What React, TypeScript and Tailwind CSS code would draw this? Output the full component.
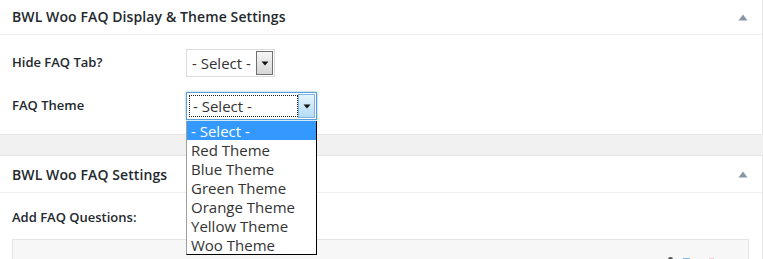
import React from 'react';

const themes = ['- Select -', 'Red Theme', 'Blue Theme', 'Green Theme', 'Orange Theme', 'Yellow Theme', 'Woo Theme'];

function Toggle() {
  return (
    <svg width="10" height="7" viewBox="0 0 10 7" className="block">
      <path d="M5 0.5 L9.5 6.5 L0.5 6.5 Z" fill="#8a96a3" />
    </svg>
  );
}

function Caret() {
  return (
    <svg width="8" height="5" viewBox="0 0 8 5" className="block">
      <path d="M0.5 0.5 L7.5 0.5 L4 4.5 Z" fill="#111" />
    </svg>
  );
}

export default function App() {
  return (
    <div className="relative w-[763px] h-[259px] overflow-hidden bg-[#f1f1f1] font-['Open_Sans',sans-serif] text-[#32373c]">
      {/* Display & Theme box */}
      <div className="w-[763px] bg-white border-r border-b border-[#e5e5e5]">
        <div className="h-[35px] border-b border-[#eeeeee] flex items-center justify-between pl-3 pr-[14px]">
          <h2 className="text-[14px] font-semibold text-[#23282d] leading-none tracking-[0.1px]">BWL Woo FAQ Display &amp; Theme Settings</h2>
          <Toggle />
        </div>
        <div className="px-3 pt-[14px] pb-[14px] flex flex-col gap-[15px]">
          <div className="flex items-center h-[28px]">
            <div className="w-[174px] text-[13px] font-semibold text-[#23282d]">Hide FAQ Tab?</div>
            <div className="h-[28px] w-[89px] border border-[#dddddd] bg-white flex items-center justify-between pl-[5px] pr-[1px]">
              <span className="text-[15px] leading-none text-[#333]">- Select -</span>
              <div className="h-[24px] w-[17px] border border-[#707070] bg-gradient-to-b from-[#f6f6f6] to-[#d6d6d6] flex items-center justify-center">
                <Caret />
              </div>
            </div>
          </div>
          <div className="flex items-center h-[28px]">
            <div className="w-[174px] text-[13px] font-semibold text-[#23282d]">FAQ Theme</div>
            <div className="h-[28px] w-[131px] border border-[#5b9dd9] bg-white flex items-center justify-between pl-[2px] pr-[1px] shadow-[0_0_2px_rgba(30,140,190,0.6)]">
              <div className="h-[22px] w-[109px] border border-dotted border-[#222] flex items-center pl-[3px]">
                <span className="text-[15px] leading-none text-[#333]">- Select -</span>
              </div>
              <div className="h-[24px] w-[17px] border border-[#7eb4ea] bg-gradient-to-b from-[#e5f4fc] to-[#b4dcf4] flex items-center justify-center">
                <Caret />
              </div>
            </div>
          </div>
        </div>
      </div>

      {/* FAQ Settings box */}
      <div className="mt-5 w-[763px] bg-white border-t border-r border-[#e5e5e5] h-[110px]">
        <div className="h-[37px] border-b border-[#eeeeee] flex items-center justify-between pl-3 pr-[14px]">
          <h2 className="text-[14px] font-semibold text-[#23282d] leading-none tracking-[0.1px] pt-[1px]">BWL Woo FAQ Settings</h2>
          <Toggle />
        </div>
        <div className="px-3 pt-[15px]">
          <div className="text-[13px] font-semibold text-[#23282d] leading-[18px]">Add FAQ Questions:</div>
          <div className="mt-[13px] w-[737px] h-[30px] border border-[#e5e5e5] bg-[#f7f7f7] relative">
            <span className="absolute left-[655px] top-[17px] w-[5px] h-[4px] rounded-t-full bg-[#555]" />
            <span className="absolute left-[670px] top-[18px] w-[7px] h-[3px] bg-[#7fb7e0]" />
            <span className="absolute left-[696px] top-[18px] w-[5px] h-[3px] bg-[#f6c9d6]" />
          </div>
        </div>
      </div>

      {/* open dropdown list */}
      <div className="absolute left-[186px] top-[121px] w-[131px] bg-white border border-black border-l-[#a0a0a0] border-t-0">
        {themes.map((t, i) => (
          <div
            key={t}
            className={`h-[19px] flex items-center pl-[4px] pt-[1px] text-[15px] leading-none ${
              i === 0 ? 'bg-[#3399ff] text-white' : 'text-[#333]'
            }`}
          >
            {t}
          </div>
        ))}
      </div>
    </div>
  );
}
